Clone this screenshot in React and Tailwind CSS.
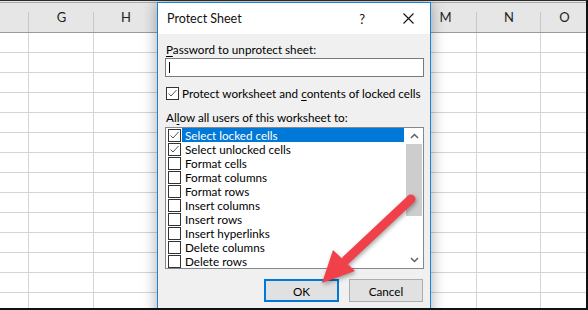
import React from "react";

const cols = [29, 65, 64, 64, 64, 64, 64, 63, 64, 47];
const letters = ["", "G", "H", "", "", "", "", "M", "N", "O"];
const items = [
  ["Select locked cells", true],
  ["Select unlocked cells", true],
  ["Format cells", false],
  ["Format columns", false],
  ["Format rows", false],
  ["Insert columns", false],
  ["Insert rows", false],
  ["Insert hyperlinks", false],
  ["Delete columns", false],
  ["Delete rows", false],
];

function Check({ checked }) {
  return (
    <div className="w-[13px] h-[13px] border border-[#333333] bg-white flex items-center justify-center shrink-0">
      {checked && (
        <svg width="11" height="11" viewBox="0 0 11 11">
          <path d="M1.5 5.5 L4 8 L9.5 2" stroke="#555" strokeWidth="1" fill="none" />
        </svg>
      )}
    </div>
  );
}

export default function App() {
  return (
    <div
      className="relative w-[588px] h-[310px] overflow-hidden bg-white border-t border-t-[#2b2b2b] border-r-2 border-r-[#111] border-b-2 border-b-[#111]"
      style={{ fontFamily: 'Lato, "Noto Sans", sans-serif' }}
    >
      {/* sheet */}
      <div className="flex flex-col">
        <div className="h-[1px] bg-[#e6e6e6]" />
        <div className="flex h-[31px] bg-[#e6e6e6] border-t border-t-[#ababab] border-b border-b-[#9b9b9b]">
          {cols.map((w, i) => (
            <div key={i} style={{ width: w }} className="relative shrink-0 flex items-center justify-center text-[13px] text-[#222]">
              <span className="mt-[1px]">{letters[i]}</span>
              {i < cols.length - 1 && (
                <div className="absolute right-0 top-[9px] bottom-0 w-px bg-[#c8c8c8]" />
              )}
            </div>
          ))}
        </div>
        {Array.from({ length: 14 }).map((_, r) => (
          <div key={r} className="flex h-[20px]">
            {cols.map((w, i) => (
              <div key={i} style={{ width: w }} className="shrink-0 border-b border-[#d4d4d4] border-r" />
            ))}
          </div>
        ))}
      </div>

      {/* dialog */}
      <div className="absolute left-[157px] top-[1px] w-[274px] h-[330px] border border-[#1883d7] bg-[#f0f0f0] shadow-[0_0_14px_rgba(0,0,0,0.35)] flex flex-col text-[11.7px] leading-[14px] text-black">
        <div className="h-[31px] bg-white flex items-center pl-[9px] pr-[16px] shrink-0">
          <span className="text-[12.5px] text-[#111]">Protect Sheet</span>
          <span className="ml-auto mr-[38px] text-[13px] text-[#111]">?</span>
          <svg width="11" height="11" viewBox="0 0 11 11">
            <path d="M0.5 0.5 L10.5 10.5 M10.5 0.5 L0.5 10.5" stroke="#111" strokeWidth="1.1" />
          </svg>
        </div>
        <div className="flex flex-col pl-[7px] pr-[6px] pt-[7px]">
          <div className="h-[16px] leading-[16px] pl-px whitespace-nowrap">
            <span className="underline underline-offset-2">P</span>assword to unprotect sheet:
          </div>
          <div className="mt-[1px] h-[19px] border border-[#7a7a7a] bg-white flex items-center">
            <div className="ml-[3px] w-px h-[11px] bg-black" />
          </div>
          <div className="mt-[9px] flex items-center h-[14px] pl-px whitespace-nowrap">
            <Check checked />
            <span className="ml-[3px]">
              Protect worksheet and <span className="underline underline-offset-2">c</span>ontents of locked cells
            </span>
          </div>
          <div className="mt-[9px] h-[16px] leading-[16px] pl-px whitespace-nowrap">
            Al<span className="underline underline-offset-2">l</span>ow all users of this worksheet to:
          </div>
          <div className="mt-[2px] h-[142px] border border-[#828790] bg-white flex">
            <div className="flex flex-col flex-1 pl-[2px]">
              {items.map(([label, c], i) => (
                <div key={i} className="h-[14px] flex items-center">
                  <Check checked={c} />
                  <div
                    className={
                      "ml-[1px] flex-1 h-[14px] leading-[14px] pl-[3px] whitespace-nowrap " +
                      (i === 0 ? "bg-[#0078d7] text-white" : "")
                    }
                  >
                    {label}
                  </div>
                </div>
              ))}
            </div>
            <div className="w-[17px] ml-[2px] flex flex-col bg-white">
              <div className="h-[15px] flex items-center justify-center">
                <svg width="9" height="6" viewBox="0 0 9 6">
                  <path d="M1 5 L4.5 1.5 L8 5" stroke="#606060" strokeWidth="1.5" fill="none" />
                </svg>
              </div>
              <div className="mt-px h-[72px] mr-[1px] bg-[#cdcdcd]" />
              <div className="flex-1" />
              <div className="h-[17px] flex items-center justify-center">
                <svg width="9" height="6" viewBox="0 0 9 6">
                  <path d="M1 1 L4.5 4.5 L8 1" stroke="#606060" strokeWidth="1.5" fill="none" />
                </svg>
              </div>
            </div>
          </div>
          <div className="mt-[10px] flex justify-end gap-[10px] pr-px">
            <div className="w-[75px] h-[23px] border-2 border-[#0078d7] bg-[#e1e1e1] flex items-center justify-center">OK</div>
            <div className="w-[74px] h-[23px] border border-[#adadad] bg-[#e1e1e1] flex items-center justify-center">Cancel</div>
          </div>
        </div>
      </div>

      {/* arrow */}
      <svg className="absolute left-0 top-0" width="588" height="310" style={{ filter: "drop-shadow(1px 2px 2px rgba(0,0,0,0.35))" }}>
        <line x1="411" y1="198" x2="346" y2="259" stroke="#f0414a" strokeWidth="9" strokeLinecap="round" />
        <polygon points="322,282 333,249 355,270" fill="#f0414a" />
      </svg>
    </div>
  );
}
